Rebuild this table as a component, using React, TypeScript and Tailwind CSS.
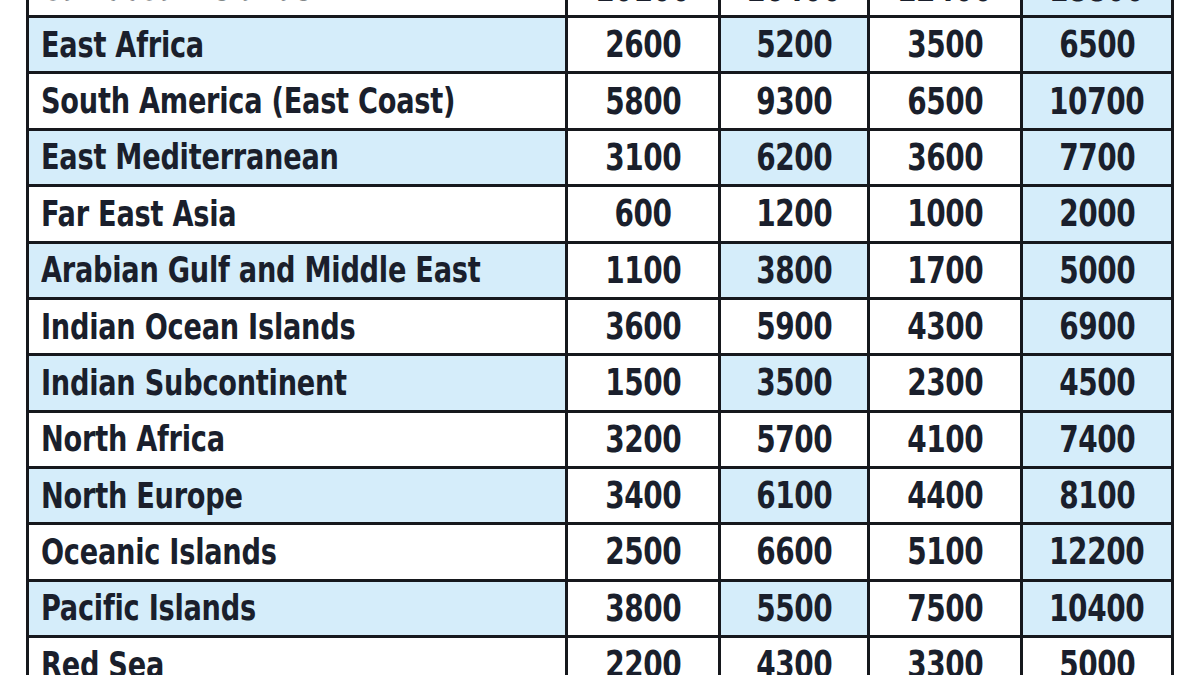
import React from "react";

type Row = { name: string; v: string[]; shaded: boolean; lastBlue?: boolean };

const rows: Row[] = [
  { name: "Caribbean Islands", v: ["10100", "16400", "12400", "18800"], shaded: false },
  { name: "East Africa", v: ["2600", "5200", "3500", "6500"], shaded: true },
  { name: "South America (East Coast)", v: ["5800", "9300", "6500", "10700"], shaded: false },
  { name: "East Mediterranean", v: ["3100", "6200", "3600", "7700"], shaded: true },
  { name: "Far East Asia", v: ["600", "1200", "1000", "2000"], shaded: false },
  { name: "Arabian Gulf and Middle East", v: ["1100", "3800", "1700", "5000"], shaded: true },
  { name: "Indian Ocean Islands", v: ["3600", "5900", "4300", "6900"], shaded: false },
  { name: "Indian Subcontinent", v: ["1500", "3500", "2300", "4500"], shaded: true },
  { name: "North Africa", v: ["3200", "5700", "4100", "7400"], shaded: false },
  { name: "North Europe", v: ["3400", "6100", "4400", "8100"], shaded: true },
  { name: "Oceanic Islands", v: ["2500", "6600", "5100", "12200"], shaded: false },
  { name: "Pacific Islands", v: ["3800", "5500", "7500", "10400"], shaded: true },
  { name: "Red Sea", v: ["2200", "4300", "3300", "5000"], shaded: false, lastBlue: false },
];

const font = { fontFamily: '"DejaVu Sans Condensed", "Liberation Sans", sans-serif' };

export default function App() {
  return (
    <div className="w-[1200px] h-[675px] overflow-hidden bg-white" style={font}>
      <div className="ml-[26px] mt-[-41.3px] w-[1148px] bg-[#16181d] p-[3px] grid grid-cols-[536px_150px_146px_150px_148px] gap-[3px] auto-rows-[53.36px]">
        {rows.map((r, i) => {
          const blue = "bg-[#d5edfa]";
          const white = "bg-white";
          const lastBlue = r.lastBlue === undefined ? true : r.lastBlue;
          return (
            <React.Fragment key={i}>
              <div className={`${r.shaded ? blue : white} flex items-center pl-[12px] text-[36px] font-bold text-[#1a1f2c] leading-none whitespace-nowrap`}>
                <span className="inline-block origin-left scale-x-[0.84] tracking-[-0.3px]">{r.name}</span>
              </div>
              {r.v.map((val, j) => {
                const isBlue = j === 3 ? lastBlue : j === 1 && r.shaded;
                return (
                  <div
                    key={j}
                    className={`${isBlue ? blue : white} flex items-center justify-center text-[37px] font-bold text-[#1a1f2c] leading-none`}
                  >
                    <span className="inline-block origin-center scale-x-[0.84] tracking-[-0.5px]">{val}</span>
                  </div>
                );
              })}
            </React.Fragment>
          );
        })}
      </div>
    </div>
  );
}
